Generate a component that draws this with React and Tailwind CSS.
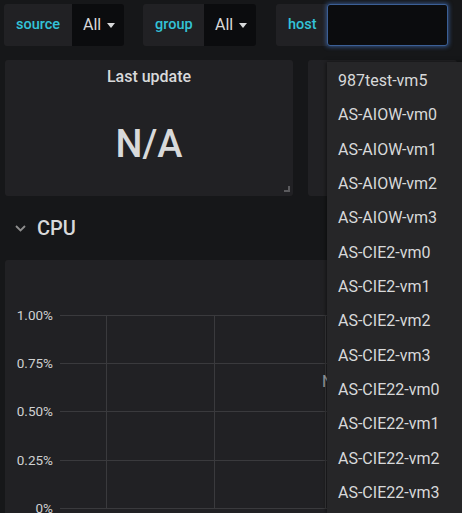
import React from "react";

const HOSTS = [
  "987test-vm5",
  "AS-AIOW-vm0",
  "AS-AIOW-vm1",
  "AS-AIOW-vm2",
  "AS-AIOW-vm3",
  "AS-CIE2-vm0",
  "AS-CIE2-vm1",
  "AS-CIE2-vm2",
  "AS-CIE2-vm3",
  "AS-CIE22-vm0",
  "AS-CIE22-vm1",
  "AS-CIE22-vm2",
  "AS-CIE22-vm3"
];

const Caret = () => (
  <svg width="8" height="5" viewBox="0 0 8 5" className="ml-[6px]">
    <path d="M0 0 L8 0 L4 5 Z" fill="#d8d9da" />
  </svg>
);

const VarSelect = ({ label, labelWidth, value }) => (
  <div className="flex h-[42px]">
    <div
      className={`flex items-center rounded-l-[3px] bg-[#212124] pl-[12px] text-[14.5px] font-medium text-[#33c3d8] ${labelWidth}`}
    >
      {label}
    </div>
    <div className="flex w-[52px] items-center rounded-r-[3px] bg-[#0b0c0e] pl-[11px] text-[16px] text-[#d8d9da]">
      {value}
      <Caret />
    </div>
  </div>
);

const CpuGraph = () => {
  const rows = [
    { y: 55, label: "1.00%" },
    { y: 103, label: "0.75%" },
    { y: 151, label: "0.50%" },
    { y: 200, label: "0.25%" },
    { y: 248, label: "0%" }
  ];
  return (
    <svg width="452" height="253" className="block">
      {rows.map((r) => (
        <g key={r.label}>
          <line x1="55" x2="452" y1={r.y + 0.5} y2={r.y + 0.5} stroke="#3a3a3d" />
          <text
            x="48"
            y={r.y + 5}
            textAnchor="end"
            fontSize="13.5"
            fill="#d0d1d2"
            fontFamily="Roboto, sans-serif"
          >
            {r.label}
          </text>
        </g>
      ))}
      {[101, 209, 320].map((x) => (
        <line key={x} x1={x + 0.5} x2={x + 0.5} y1="55" y2="248" stroke="#3a3a3d" />
      ))}
      <text x="317" y="127" fontSize="16" fill="#9fa0a2" fontFamily="Roboto, sans-serif">
        No data points
      </text>
    </svg>
  );
};

const App = () => (
  <div className="relative h-[513px] w-full overflow-hidden bg-[#161719] font-['Roboto',sans-serif]">
    {/* variables */}
    <div className="flex pl-[4px] pt-[4px]">
      <VarSelect label="source" labelWidth="w-[68px]" value="All" />
      <div className="ml-[19px]">
        <VarSelect label="group" labelWidth="w-[61px]" value="All" />
      </div>
      <div className="ml-[20px] flex h-[42px]">
        <div className="flex w-[51px] items-center rounded-l-[3px] bg-[#212124] pl-[12px] text-[14.5px] font-medium text-[#33c3d8]">
          host
        </div>
        <div className="w-[121px] rounded-[3px] border border-[#3b5f95] bg-[#0b0c0e] shadow-[0_0_4px_1px_rgba(70,120,200,0.6)]" />
      </div>
    </div>

    {/* stat panels */}
    <div className="mt-[14px] flex gap-[15px] pl-[5px] pr-[5px]">
      <div className="relative flex h-[136px] w-[288px] flex-col items-center rounded-[3px] bg-[#212124]">
        <div className="pt-[7px] text-[16px] font-medium leading-[20px] text-[#d8d9da]">
          Last update
        </div>
        <div className="mt-[37px] text-[38px] font-medium leading-[40px] text-[#d8d9da]">
          N/A
        </div>
        <svg width="6" height="6" className="absolute bottom-[4px] right-[3px]">
          <path d="M4 0 H6 V6 H0 V4 H4 Z" fill="#5a5a5d" />
        </svg>
      </div>
      <div className="h-[136px] flex-1 rounded-[3px] bg-[#212124]" />
    </div>

    {/* row header */}
    <div className="flex h-[64px] items-center pl-[15px]">
      <svg width="11" height="7" viewBox="0 0 11 7">
        <path d="M1 1 L5.5 5.5 L10 1" fill="none" stroke="#8e8e8e" strokeWidth="1.8" />
      </svg>
      <span className="ml-[11px] text-[20px] font-medium text-[#d8d9da]">CPU</span>
    </div>

    {/* graph panel */}
    <div className="mx-[5px] h-[253px] rounded-t-[3px] bg-[#212124]">
      <CpuGraph />
    </div>

    {/* host dropdown */}
    <div className="absolute left-[327px] top-[62px] bottom-0 w-[150px] bg-[#262628] pt-[2px] shadow-[-1px_0_4px_rgba(0,0,0,0.5)]">
      {HOSTS.map((h) => (
        <div
          key={h}
          className="flex h-[34.33px] items-center pl-[11px] text-[16px] text-[#d8d9da]"
        >
          {h}
        </div>
      ))}
    </div>
  </div>
);

export default App;
